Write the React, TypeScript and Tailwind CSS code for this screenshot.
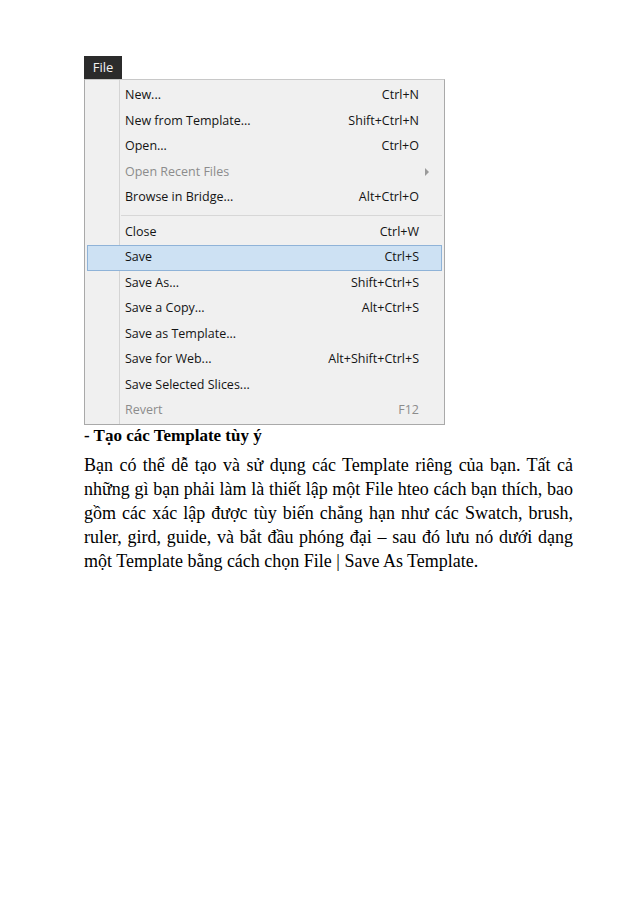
const items: { label?: string; key?: string; disabled?: boolean; sub?: boolean; sep?: boolean; active?: boolean }[] = [
  { label: "New...", key: "Ctrl+N" },
  { label: "New from Template...", key: "Shift+Ctrl+N" },
  { label: "Open...", key: "Ctrl+O" },
  { label: "Open Recent Files", disabled: true, sub: true },
  { label: "Browse in Bridge...", key: "Alt+Ctrl+O" },
  { sep: true },
  { label: "Close", key: "Ctrl+W" },
  { label: "Save", key: "Ctrl+S", active: true },
  { label: "Save As...", key: "Shift+Ctrl+S" },
  { label: "Save a Copy...", key: "Alt+Ctrl+S" },
  { label: "Save as Template..." },
  { label: "Save for Web...", key: "Alt+Shift+Ctrl+S" },
  { label: "Save Selected Slices..." },
  { label: "Revert", key: "F12", disabled: true },
];

function FileMenu() {
  return (
    <div className="w-[361px] font-['Open_Sans',sans-serif] text-[12.5px]">
      <div className="bg-[#2b2b2b] text-[#f2f2f2] w-[38px] h-[23px] flex items-center justify-center text-[13px]">
        File
      </div>
      <div className="relative border border-[#a9a9a9] border-t-[#c8c8c8] bg-[#f0f0f0] pt-[3px] pb-0 px-[2px]">
        <div className="absolute left-[34px] top-0 bottom-0 border-l border-[#d4d4d4]" />
        {items.map((it, i) =>
          it.sep ? (
            <div key={i} className="ml-[34px] h-[9px] flex items-center">
              <div className="w-full border-t border-[#d7d7d7]" />
            </div>
          ) : (
            <div
              key={i}
              className={`relative h-[25.5px] flex items-center pl-[37px] pr-[22px] border ${
                it.active ? "bg-[#cde1f3] border-[#8fb3d8]" : "border-transparent"
              } ${it.disabled ? "text-[#8c8c8c]" : "text-[#141414]"}`}
            >
              <span className="flex-1">{it.label}</span>
              {it.key && <span>{it.key}</span>}
              {it.sub && (
                <span className="absolute right-[12px] w-0 h-0 border-y-[4px] border-y-transparent border-l-[4px] border-l-[#9a9a9a]" />
              )}
            </div>
          )
        )}
      </div>
    </div>
  );
}

export default function App() {
  return (
    <div className="w-[638px] h-[902px] bg-white pl-[84px] pr-[65px] pt-[56px] font-['Liberation_Serif',serif] text-black">
      <FileMenu />
      <h2 className="font-bold text-[17px] mt-0 leading-[22px]">- Tạo các Template tùy ý</h2>
      <p className="text-[18px] leading-[24px] mt-[6px] text-justify">
        Bạn có thể dễ tạo và sử dụng các Template riêng của bạn. Tất cả những gì bạn phải làm là thiết lập một File hteo cách bạn
        thích, bao gồm các xác lập được tùy biến chẳng hạn như các Swatch, brush, ruler, gird, guide, và bắt đầu phóng đại – sau đó
        lưu nó dưới dạng một Template bằng cách chọn File | Save As Template.
      </p>
    </div>
  );
}
